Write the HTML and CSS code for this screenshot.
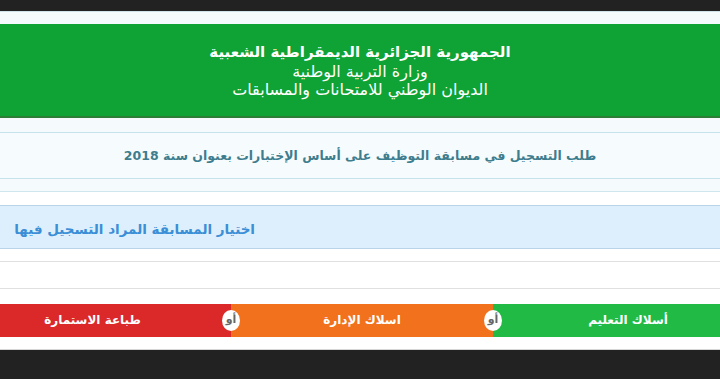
FILE: index.html
```html
<!DOCTYPE html>
<html lang="ar" dir="rtl">
  <head>
    <meta charset="UTF-8" />
    <meta name="viewport" content="width=device-width, initial-scale=1.0" />
    <title>الديوان الوطني للامتحانات والمسابقات</title>
    <link rel="stylesheet" href="styles.css">
  </head>
  <body>
    <div class="topbar"></div>

    <div class="intro">
      <header class="banner">
        <h1>الجمهورية الجزائرية الديمقراطية الشعبية</h1>
        <p>وزارة التربية الوطنية</p>
        <p>الديوان الوطني للامتحانات والمسابقات</p>
      </header>
      <div class="notice">
        طلب التسجيل في مسابقة التوظيف على أساس الإختبارات بعنوان سنة 2018
      </div>
    </div>

    <div class="content">
      <div class="panel">
        <div class="panel-title">
          <span>اختيار المسابقة المراد التسجيل فيها</span>
        </div>
      </div>
      <div class="row"></div>

      <div class="choices">
        <a class="choice green" href="#">أسلاك التعليم</a>
        <span class="or"><span>أو</span></span>
        <a class="choice orange" href="#">اسلاك الإدارة</a>
        <span class="or"><span>أو</span></span>
        <a class="choice red" href="#">طباعة الاستمارة</a>
      </div>
    </div>

    <div class="footer"></div>
  </body>
</html>
```

FILE: styles.css
```css
html,
body {
  overflow-x: hidden;
}
body {
  margin: 0;
  font-family: "DejaVu Sans", sans-serif;
  background-color: #222;
  color: #333;
}
.topbar {
  height: 11px;
  background-color: #222;
}
.intro {
  background-color: #f5fbfd;
  border-top: 1px solid #cfe3ea;
  border-bottom: 1px solid #cfe6ee;
  padding: 12px 0;
}
.banner {
  background-color: #0fa335;
  border-bottom: 2px solid #2c7d35;
  height: 94px;
  color: #fff;
  text-align: center;
  padding-top: 17px;
  box-sizing: border-box;
}
.banner h1 {
  margin: 0;
  font-size: 15px;
  line-height: 22px;
  font-weight: bold;
}
.banner p {
  margin: 0;
  font-size: 16px;
  line-height: 18px;
}
.notice {
  margin-top: 14px;
  background-color: #f6fcfe;
  border-top: 1px solid #c6e3ec;
  border-bottom: 1px solid #c6e3ec;
  height: 45px;
  line-height: 45px;
  text-align: center;
  color: #3e7d8d;
  font-size: 12.5px;
  font-weight: bold;
}
.content {
  background-color: #fff;
  padding: 13px 0 12px;
  border-bottom: 1px solid #d6d6d6;
}
.panel {
  background-color: #ddeefd;
  border-top: 1px solid #b9d4e8;
  border-bottom: 1px solid #b9d4e8;
  height: 42px;
  display: flex;
  justify-content: flex-end;
  align-items: center;
}
.panel-title {
  width: 255px;
  overflow: hidden;
  white-space: nowrap;
  color: #3a8fd6;
  font-size: 13.5px;
  font-weight: bold;
  padding-top: 3px;
}
.row {
  margin-top: 12px;
  height: 26px;
  border-top: 1px solid #e0e0e0;
  border-bottom: 1px solid #e0e0e0;
  margin-bottom: 15px;
}
.choices {
  display: flex;
  align-items: center;
  height: 33px;
  margin: 0 -43px 0 -46px;
}
.choice {
  height: 33px;
  line-height: 33px;
  text-align: center;
  color: #fff;
  font-size: 12px;
  font-weight: bold;
  text-decoration: none;
}
.green {
  width: 270px;
  background-color: #21ba45;
}
.orange {
  width: 262px;
  background-color: #f2711c;
}
.red {
  flex: 1;
  background-color: #db2828;
}
.or {
  width: 0;
  position: relative;
  z-index: 1;
  display: flex;
  justify-content: center;
}
.or span {
  flex: none;
  width: 18px;
  height: 21px;
  line-height: 20px;
  border-radius: 50%;
  background-color: #fff;
  color: #666;
  font-size: 11px;
  font-weight: bold;
  text-align: center;
}
.footer {
  height: 40px;
  background-color: #222;
}
```
